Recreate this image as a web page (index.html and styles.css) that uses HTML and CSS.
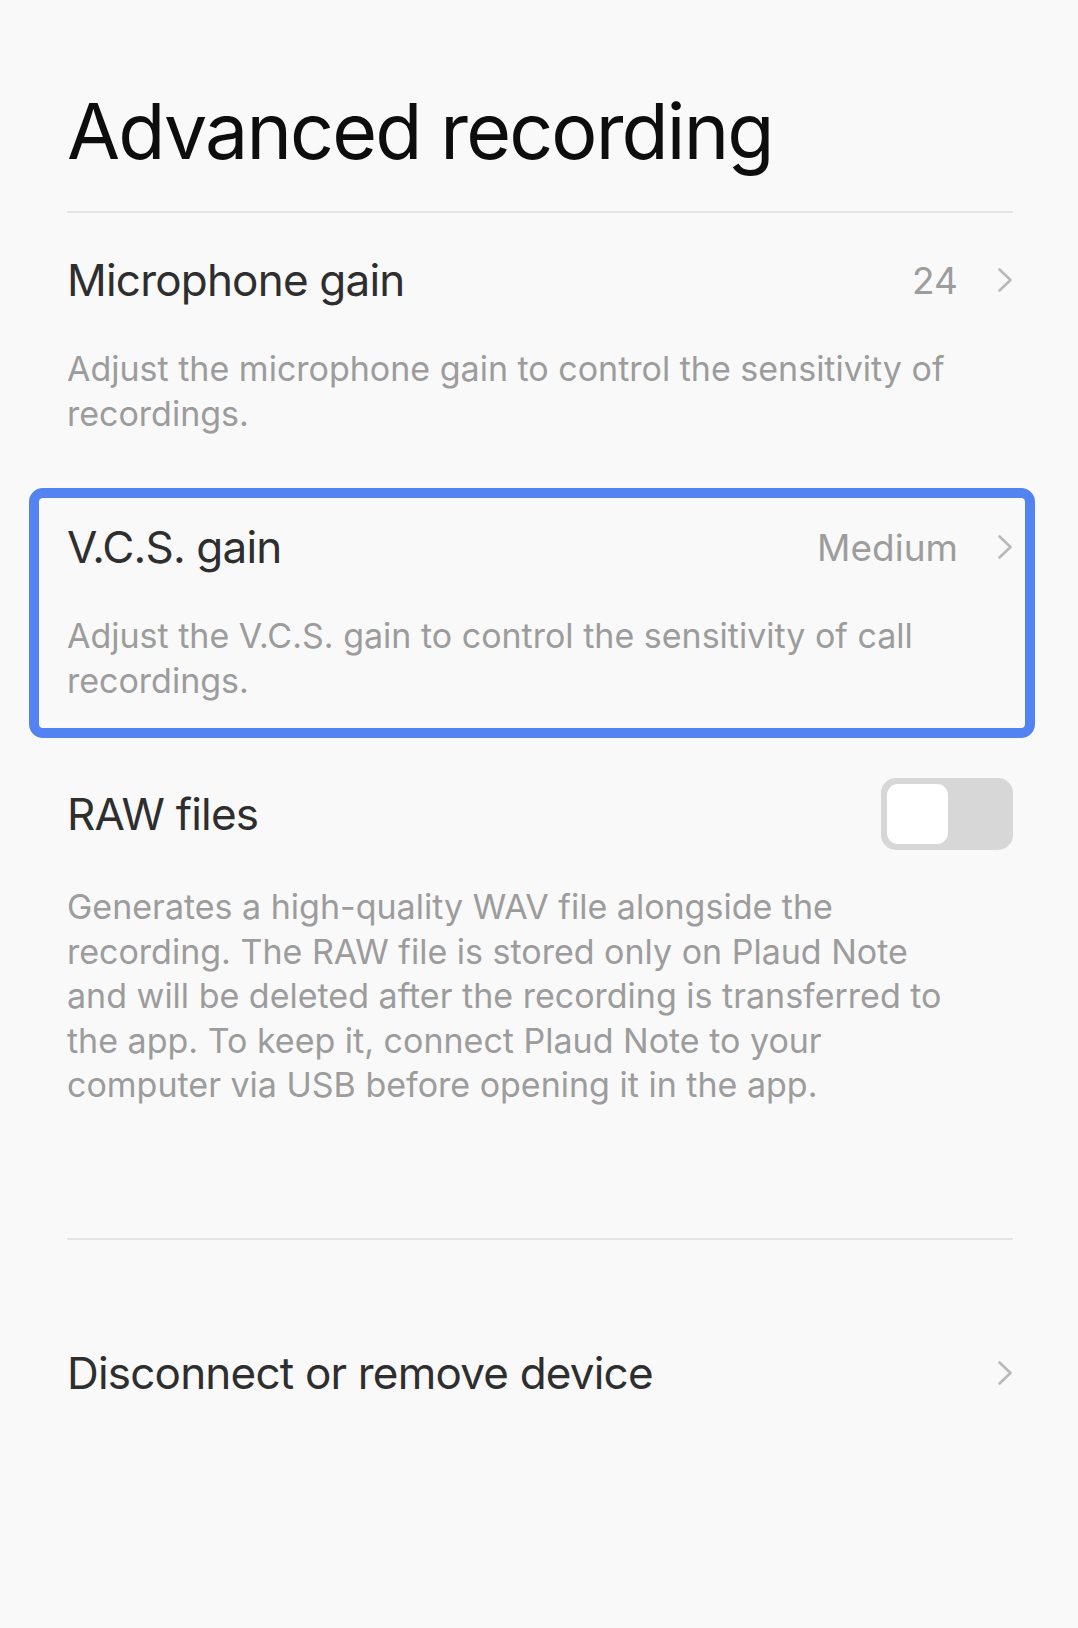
FILE: index.html
```html
<!DOCTYPE html>
<html lang="en">
<head>
    <meta charset="UTF-8">
    <meta name="viewport" content="width=device-width, initial-scale=1.0">
    <title>Advanced recording</title>
    <link rel="stylesheet" href="styles.css">
</head>
<body>
    <div class="screen">
        <h1 class="page-title">Advanced recording</h1>

        <div class="settings">
            <div class="setting">
                <div class="setting-row">
                    <span class="setting-name">Microphone gain</span>
                    <span class="setting-value">
                        24
                        <svg class="chevron" viewBox="0 0 16 26"><polyline points="2.5,2.5 13.5,13 2.5,23.5"/></svg>
                    </span>
                </div>
                <p class="setting-desc">Adjust the microphone gain to control the sensitivity of recordings.</p>
            </div>

            <div class="setting focused">
                <div class="setting-row">
                    <span class="setting-name">V.C.S. gain</span>
                    <span class="setting-value">
                        Medium
                        <svg class="chevron" viewBox="0 0 16 26"><polyline points="2.5,2.5 13.5,13 2.5,23.5"/></svg>
                    </span>
                </div>
                <p class="setting-desc">Adjust the V.C.S. gain to control the sensitivity of call recordings.</p>
            </div>

            <div class="setting has-toggle">
                <div class="setting-row">
                    <span class="setting-name">RAW files</span>
                    <span class="toggle"><span class="knob"></span></span>
                </div>
                <p class="setting-desc">Generates a high-quality WAV file alongside the recording. The RAW file is stored only on Plaud Note and will be deleted after the recording is transferred to the app. To keep it, connect Plaud Note to your computer via USB before opening it in the app.</p>
            </div>
        </div>

        <div class="device-row">
            <span class="setting-name">Disconnect or remove device</span>
            <svg class="chevron" viewBox="0 0 16 26"><polyline points="2.5,2.5 13.5,13 2.5,23.5"/></svg>
        </div>
    </div>
</body>
</html>
```

FILE: styles.css
```css
body {
    margin: 0;
    padding: 0;
    background-color: #f9f9f9;
    font-family: Inter, "Noto Sans", sans-serif;
    color: #2e2e2e;
}

.screen {
    padding: 85px 65px 0 67px;
}

.page-title {
    margin: 0;
    padding-bottom: 34px;
    border-bottom: 2px solid #e4e4e4;
    font-size: 77px;
    font-weight: 400;
    letter-spacing: -1.85px;
    line-height: 92px;
    color: #0d0d0d;
}

.settings {
    display: flex;
    flex-direction: column;
    gap: 17px;
    padding-top: 8px;
}

.setting {
    margin: 0 -22px 0 -38px;
    padding: 22px 12px 25px 28px;
    border: 10px solid transparent;
    border-radius: 14px;
    display: flex;
    flex-direction: column;
    gap: 40px;
}

.setting.focused {
    border-color: #5283f0;
}

.setting.has-toggle {
    gap: 44px;
}

.setting-row {
    display: flex;
    justify-content: space-between;
    align-items: center;
    height: 54px;
}

.setting-name {
    font-size: 44px;
    letter-spacing: -0.8px;
    line-height: 54px;
    color: #2e2e2e;
}

.setting-value {
    display: flex;
    align-items: center;
    gap: 39px;
    font-size: 37px;
    color: #9d9d9d;
}

.chevron {
    width: 16px;
    height: 26px;
    fill: none;
    stroke: #b9b9b9;
    stroke-width: 2.6;
    stroke-linecap: round;
    stroke-linejoin: round;
}

.setting-desc {
    margin: 0;
    max-width: 895px;
    font-size: 34px;
    line-height: 44.5px;
    color: #9c9c9c;
}

.toggle {
    width: 132px;
    height: 72px;
    margin: -9px 0;
    padding: 6px;
    box-sizing: border-box;
    border-radius: 15px;
    background-color: #d7d7d7;
    display: flex;
}

.toggle .knob {
    width: 61px;
    height: 60px;
    border-radius: 11px;
    background-color: #fff;
}

.device-row {
    margin-top: 95px;
    padding-top: 106px;
    border-top: 2px solid #e4e4e4;
    display: flex;
    justify-content: space-between;
    align-items: center;
    height: 54px;
}
```
